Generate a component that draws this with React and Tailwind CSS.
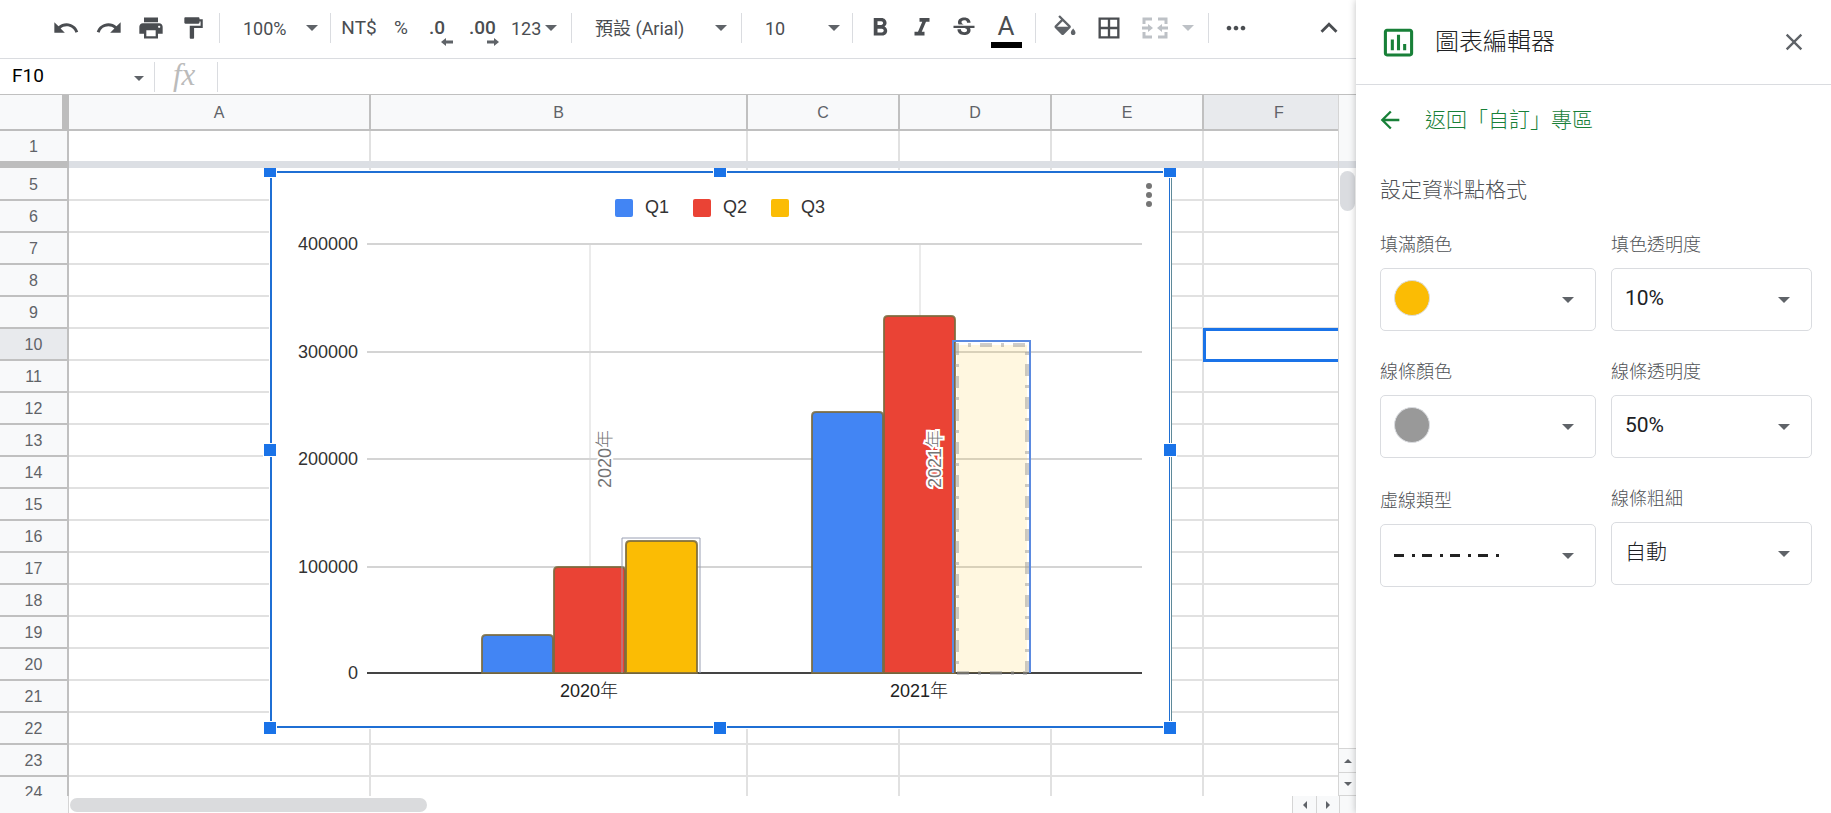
import React from "react";
import {
  MdArrowBack,
  MdBorderAll,
  MdClose,
  MdExpandLess,
  MdFormatBold,
  MdFormatItalic,
  MdFormatPaint,
  MdInsertChartOutlined,
  MdMoreHoriz,
  MdPrint,
  MdRedo,
  MdStrikethroughS,
  MdUndo,
} from "react-icons/md";

const rows = Array.from({ length: 20 }, (_, i) => i + 5);
const columns = ["A", "B", "C", "D", "E", "F"];

const Caret = ({ className = "" }) => (
  <svg
    viewBox="0 0 12 6"
    className={`w-3 h-1.5 fill-[#5f6368] pointer-events-none ${className}`}
  >
    <path d="M0 0h12L6 6z" />
  </svg>
);

const Separator = ({ className = "" }) => (
  <div className={`w-px h-[30px] bg-[#dadce0] shrink-0 ${className}`} />
);

const IconButton = ({ label, className = "w-[42px]", children }) => (
  <button
    type="button"
    aria-label={label}
    className={`h-9 flex items-center justify-center shrink-0 ${className}`}
  >
    {children}
  </button>
);

const ToolbarSelect = ({ label, value, className, caret }) => (
  <div className={`relative flex items-center shrink-0 ${className}`}>
    <select
      aria-label={label}
      className="appearance-none w-full h-9 pl-[23px] bg-transparent outline-none"
    >
      <option>{value}</option>
    </select>
    <Caret className={`absolute ${caret}`} />
  </div>
);

const FillIcon = () => (
  <svg viewBox="0 0 24 24" className="size-7 fill-[#5f6368]">
    <path d="M16.560 9.940L7.620 1 6.210 2.410l2.380 2.380-5.150 5.150c-.59.59-.59 1.540 0 2.120l5.500 5.500c.29.29.68.44 1.060.44s.77-.15 1.060-.44l5.500-5.500c.59-.58.59-1.530 0-2.120zM5.210 11L10 6.210 14.790 11H5.210zM19 12.500s-2 2.170-2 3.500c0 1.100.9 2 2 2s2-.9 2-2c0-1.330-2-3.500-2-3.500z" />
  </svg>
);

const MergeIcon = () => (
  <svg viewBox="0 0 26 22" className="w-[26px] h-[22px] fill-none stroke-[#bdc1c6] stroke-3">
    <path d="M2 7V2H10M16 2H24V7M2 15V20H10M16 20H24V15" />
    <path d="M0 11H7M26 11H19" />
    <path d="M6 7l5 4-5 4zM20 7l-5 4 5 4z" fill="#bdc1c6" stroke="none" />
  </svg>
);

const DecimalArrow = ({ flip }) => (
  <svg
    viewBox="0 0 12 8"
    className="absolute right-0 -bottom-1 w-3 h-2 fill-[#5f6368]"
  >
    <path d={flip ? "M0 2.500h7V0l5 4-5 4V5.500H0z" : "M12 2.500H5V0L0 4l5 4V5.500h7z"} />
  </svg>
);

const Toolbar = () => (
  <div
    role="toolbar"
    className="h-[59px] shrink-0 flex items-center pl-[45px] pr-1.5 pb-0.5 border-b border-[#dadce0] text-[18px] text-[#4a4d51]"
  >
    <IconButton label="復原">
      <MdUndo size={28} />
    </IconButton>
    <IconButton label="重做" className="w-11">
      <MdRedo size={28} />
    </IconButton>
    <IconButton label="列印" className="w-10">
      <MdPrint size={28} />
    </IconButton>
    <IconButton label="複製格式" className="w-11">
      <MdFormatPaint size={26} />
    </IconButton>
    <Separator className="ml-1" />
    <ToolbarSelect label="縮放" value="100%" className="w-[110px]" caret="right-3" />
    <Separator />
    <button type="button" className="w-[56px] h-9 text-[19px]">
      NT$
    </button>
    <button type="button" className="w-7 h-9 text-[19px]">
      %
    </button>
    <button type="button" className="w-[42px] h-9 pl-3.5 text-left text-[19px] font-medium">
      <span className="relative inline-block w-6">
        .0
        <DecimalArrow />
      </span>
    </button>
    <button type="button" className="w-12 h-9 pl-3 text-left text-[19px] font-medium">
      <span className="relative inline-block w-[30px]">
        .00
        <DecimalArrow flip />
      </span>
    </button>
    <button type="button" className="w-[66px] h-9 pl-1.5 flex items-center gap-1">
      123
      <Caret />
    </button>
    <Separator />
    <ToolbarSelect label="字型" value="預設 (Arial)" className="w-[169px]" caret="right-3.5" />
    <Separator />
    <ToolbarSelect label="字型大小" value="10" className="w-[110px]" caret="right-3" />
    <Separator />
    <IconButton label="粗體" className="w-[42px] ml-1.5">
      <MdFormatBold size={30} />
    </IconButton>
    <IconButton label="斜體">
      <MdFormatItalic size={30} />
    </IconButton>
    <IconButton label="刪除線">
      <MdStrikethroughS size={28} />
    </IconButton>
    <button
      type="button"
      aria-label="文字顏色"
      className="w-[42px] h-9 pt-1 flex flex-col items-center gap-1"
    >
      <span className="text-[26px] leading-6">A</span>
      <span className="w-[31px] h-1.5 bg-black shrink-0" />
    </button>
    <Separator className="mx-2" />
    <IconButton label="填滿顏色">
      <FillIcon />
    </IconButton>
    <IconButton label="框線" className="w-[46px]">
      <MdBorderAll size={28} />
    </IconButton>
    <IconButton label="合併儲存格" className="w-[46px]">
      <MergeIcon />
    </IconButton>
    <IconButton label="選取合併類型" className="w-5">
      <Caret className="fill-[#bdc1c6]!" />
    </IconButton>
    <Separator className="ml-2.5 mr-1.5" />
    <IconButton label="更多">
      <MdMoreHoriz size={28} />
    </IconButton>
    <IconButton label="隱藏選單" className="w-[42px] ml-auto">
      <MdExpandLess size={34} />
    </IconButton>
  </div>
);

const FormulaBar = () => (
  <div className="h-9 shrink-0 flex items-center border-b border-[#c0c0c0]">
    <input
      aria-label="名稱方塊"
      defaultValue="F10"
      className="w-[134px] pl-3 text-[19px] text-black outline-none"
    />
    <button type="button" aria-label="已命名範圍" className="w-5 pt-1">
      <Caret className="w-2.5! h-[5px]!" />
    </button>
    <Separator className="bg-[#c0c0c0]" />
    <span className="w-[62px] pl-[18px] pb-1 font-['Liberation_Serif',serif] italic text-[31px] leading-7 text-[#bbb]">
      fx
    </span>
    <Separator className="h-[26px]" />
    <input aria-label="公式列" className="flex-1 min-w-0 px-2 outline-none" />
  </div>
);

const SheetCols = () => (
  <colgroup>
    <col className="w-[69px]" />
    <col className="w-[302px]" />
    <col className="w-[377px]" />
    <col className="w-[152px]" />
    <col className="w-[152px]" />
    <col className="w-[152px]" />
    <col className="w-[152px]" />
  </colgroup>
);

const FrozenRows = () => (
  <table className="table-fixed w-[1356px] border-separate border-spacing-0">
    <SheetCols />
    <thead>
      <tr className="h-9">
        <td className="bg-[#f8f9fa] border-r-[7px] border-b-2 border-[#bdbdbd]" />
        {columns.map((name) => (
          <th
            key={name}
            scope="col"
            className={`border-r-2 border-b-2 border-[#c0c0c0] font-normal p-0 pt-0.5 ${
              name === "F" ? "bg-[#e8eaed]" : "bg-[#f8f9fa]"
            }`}
          >
            {name}
          </th>
        ))}
      </tr>
    </thead>
    <tbody>
      <tr className="h-[30px]">
        <th
          scope="row"
          className="bg-[#f8f9fa] border-r-2 border-[#c0c0c0] font-normal p-0 pt-0.5"
        >
          1
        </th>
        {columns.map((name) => (
          <td key={name} className="border-r-2 border-[#e1e1e1]" />
        ))}
      </tr>
    </tbody>
  </table>
);

const SheetRows = () => (
  <table className="table-fixed w-[1356px] border-separate border-spacing-0">
    <SheetCols />
    <tbody>
      {rows.map((n) => (
        <tr key={n} className={n === 5 ? "h-[33px]" : "h-8"}>
          <th
            scope="row"
            className={`border-r-2 border-b-2 border-[#c0c0c0] font-normal p-0 pt-0.5 ${
              n === 10 ? "bg-[#e8eaed]" : "bg-[#f8f9fa]"
            }`}
          >
            {n}
          </th>
          {columns.map((name) => (
            <td
              key={name}
              className={`border-r-2 border-b-2 border-[#e1e1e1] ${
                name === "F" && n === 10
                  ? "outline-3 outline-[#1a73e8] -outline-offset-2"
                  : ""
              }`}
            />
          ))}
        </tr>
      ))}
    </tbody>
  </table>
);

const legend = [
  { name: "Q1", x: 345, color: "#4285f4" },
  { name: "Q2", x: 423, color: "#ea4335" },
  { name: "Q3", x: 501, color: "#fbbc04" },
];

const gridLines = [
  { label: "400000", y: 73 },
  { label: "300000", y: 181 },
  { label: "200000", y: 288 },
  { label: "100000", y: 396 },
];

const bars = [
  { x: 212, y: 464, color: "#4285f4" },
  { x: 284, y: 396, color: "#ea4335" },
  { x: 356, y: 370, color: "#fbbc04" },
  { x: 542, y: 241, color: "#4285f4" },
  { x: 614, y: 145, color: "#ea4335" },
];

const Chart = () => (
  <svg
    viewBox="0 0 900 557"
    className="block w-[900px] h-[557px] bg-white font-['Liberation_Sans','Noto_Sans_CJK_TC',sans-serif] text-[18px]"
  >
    {legend.map(({ name, x, color }) => (
      <g key={name}>
        <rect x={x} y="28" width="18" height="18" rx="2" fill={color} />
        <text x={x + 30} y="42" fill="#333">
          {name}
        </text>
      </g>
    ))}
    <path d="M320 73V503M650 73V503" stroke="#ebebeb" strokeWidth="2" />
    {gridLines.map(({ label, y }) => (
      <g key={label}>
        <path d={`M97 ${y}H872`} stroke="#d4d4d4" strokeWidth="2" />
        <text x="88" y={y + 6} textAnchor="end" fill="#333">
          {label}
        </text>
      </g>
    ))}
    <text x="88" y="508" textAnchor="end" fill="#333">
      0
    </text>
    <path d="M97 502H872" stroke="#444" strokeWidth="2" />
    {bars.map(({ x, y, color }) => (
      <path
        key={x}
        d={`M${x} 502V${y + 4}q0-4 4-4h63q4 0 4 4V502z`}
        fill={color}
        stroke="#7a6a3c"
        strokeWidth="2"
        strokeOpacity="0.85"
      />
    ))}
    <path d="M352 502V367H430V502" fill="none" stroke="#9aa0b4" />
    <path d="M687 502V174H757V502z" fill="#fbbc04" fillOpacity="0.12" />
    <path
      d="M757 502V174H687V502H757"
      fill="none"
      stroke="#999"
      strokeOpacity="0.5"
      strokeWidth="4"
      strokeDasharray="12 9 3 9"
    />
    <path d="M683 502V170H760V502" fill="none" stroke="#5b8ae0" strokeWidth="2" />
    <g fill="#757575" stroke="#fff" strokeWidth="4" style={{ paintOrder: "stroke" }}>
      <text transform="translate(341 317) rotate(-90)" className="font-light">
        2020年
      </text>
      <text transform="translate(671 317) rotate(-90)" className="font-light">
        2021年
      </text>
    </g>
    <g fill="#222" textAnchor="middle" className="font-light">
      <text x="319" y="526">
        2020年
      </text>
      <text x="649" y="526">
        2021年
      </text>
    </g>
    <g fill="#757575">
      <circle cx="879" cy="15" r="3" />
      <circle cx="879" cy="24" r="3" />
      <circle cx="879" cy="33" r="3" />
    </g>
  </svg>
);

const handles = [
  "-left-1.5 -top-1.5",
  "left-[444px] -top-1.5",
  "-right-1.5 -top-1.5",
  "-left-1.5 top-[273px]",
  "-right-1.5 top-[273px]",
  "-left-1.5 -bottom-1.5",
  "left-[444px] -bottom-1.5",
  "-right-1.5 -bottom-1.5",
];

// Floats over the cells, selected, with its eight resize handles.
const FloatingChart = () => (
  <div className="absolute left-[270px] top-[3px] w-[900px] h-[557px]">
    <Chart />
    <div className="absolute inset-0 border-2 border-r border-[#1f6fd4] outline outline-white" />
    <div className="absolute inset-y-0 -right-[2px] w-px bg-[#5f8a99]" />
    {handles.map((place) => (
      <span
        key={place}
        className={`absolute size-3 bg-[#1a73e8] outline outline-white ${place}`}
      />
    ))}
  </div>
);

const scrollButton = "border-[#d5d5d5] bg-[#f8f9fa]";

const Sheet = () => (
  <div className="flex-1 min-h-0 flex flex-col text-[16px] text-[#5f6368] font-['Liberation_Sans',sans-serif]">
    <div className="flex-1 min-h-0 flex">
      <div className="flex-1 min-w-0 flex flex-col overflow-hidden">
        <div className="shrink-0 h-[66px] overflow-hidden">
          <FrozenRows />
        </div>
        <div className="h-[7px] shrink-0 flex">
          <div className="w-[69px] bg-[#bdbdbd]" />
          <div className="flex-1 bg-[#dcdfe4]" />
        </div>
        <div className="relative flex-1 min-h-0 overflow-hidden">
          <SheetRows />
          <FloatingChart />
        </div>
      </div>
      <div className="w-[18px] shrink-0 flex flex-col border-l border-[#d5d5d5]">
        <div className="h-[66px] bg-[#f8f9fa]" />
        <div className="h-[7px] bg-[#dcdfe4]" />
        <div className="flex-1 pt-[3px] px-px">
          <div className="h-10 rounded-full bg-[#dadce0]" />
        </div>
        <IconButton label="向上捲動" className={`h-6! border-t ${scrollButton}`}>
          <Caret className="w-2! h-1! rotate-180" />
        </IconButton>
        <IconButton label="向下捲動" className={`h-6! border-y ${scrollButton}`}>
          <Caret className="w-2! h-1!" />
        </IconButton>
      </div>
    </div>
    <div className="h-[17px] shrink-0 flex">
      <div className="w-[69px] bg-[#f8f9fa] border-r border-[#d5d5d5]" />
      <div className="flex-1 pt-0.5 pl-px">
        <div className="w-[357px] h-3.5 rounded-full bg-[#dadbdd]" />
      </div>
      <IconButton label="向左捲動" className={`h-full! w-6 border-l ${scrollButton}`}>
        <Caret className="w-2! h-1! rotate-90" />
      </IconButton>
      <IconButton label="向右捲動" className={`h-full! w-6 border-x ${scrollButton}`}>
        <Caret className="w-2! h-1! -rotate-90" />
      </IconButton>
      <div className="w-4 bg-[#f8f9fa]" />
    </div>
  </div>
);

const fieldBox =
  "w-full h-[63px] border border-[#dadce0] rounded-[5px] text-[21px] text-[#202124]";

const PickerField = ({ id, label, className = "", children }) => (
  <div className={className}>
    <label htmlFor={id} className="block h-9 pt-px text-[18px] leading-6">
      {label}
    </label>
    <button
      id={id}
      type="button"
      className={`${fieldBox} flex items-center justify-between pl-[13px] pr-[21px]`}
    >
      {children}
      <Caret />
    </button>
  </div>
);

const SelectField = ({ id, label, value, className = "" }) => (
  <div>
    <label htmlFor={id} className="block h-9 pt-px text-[18px] leading-6">
      {label}
    </label>
    <div className="relative flex items-center">
      <select
        id={id}
        className={`${fieldBox} appearance-none pl-[13px] pb-0.5 outline-none ${className}`}
      >
        <option>{value}</option>
      </select>
      <Caret className="absolute right-[22px]" />
    </div>
  </div>
);

const ChartEditor = () => (
  <aside className="relative w-[475px] shrink-0 bg-white shadow-[0_0_7px_rgba(0,0,0,0.25)] font-light text-[#4f5256]">
    <header className="h-[85px] flex items-center pl-6 pr-[23px] border-b border-[#dadce0]">
      <MdInsertChartOutlined size={37} className="text-[#188038]" />
      <h1 className="flex-1 pl-[18px] text-[24px] leading-8 text-[#202124]">
        圖表編輯器
      </h1>
      <button type="button" aria-label="關閉" className="text-[#5f6368]">
        <MdClose size={28} />
      </button>
    </header>
    <div className="pl-6 pr-[19px]">
      <button
        type="button"
        className="mt-[21px] h-7 -ml-1 flex items-center gap-[21px] text-[21px] text-[#188038]"
      >
        <MdArrowBack size={28} />
        <span className="pt-0.5">返回「自訂」專區</span>
      </button>
      <h2 className="mt-[42px] text-[21px] leading-7">設定資料點格式</h2>
      <div className="mt-7 flex gap-[15px]">
        <div className="w-[216px] flex flex-col gap-7">
          <PickerField id="fill-color" label="填滿顏色">
            <span className="size-9 mb-1 rounded-full bg-[#fbbc04] border border-[#dadce0]" />
          </PickerField>
          <PickerField id="line-color" label="線條顏色">
            <span className="size-9 mb-1 rounded-full bg-[#999] border border-[#dadce0]" />
          </PickerField>
          <PickerField id="dash-type" label="虛線類型" className="mt-0.5">
            <svg viewBox="0 0 108 3" className="w-[108px] h-[3px]">
              <path
                d="M0 1.500H108"
                stroke="#222"
                strokeWidth="3"
                strokeDasharray="10 8 3 7"
              />
            </svg>
          </PickerField>
        </div>
        <div className="flex-1 flex flex-col gap-7">
          <SelectField
            id="fill-opacity"
            label="填色透明度"
            value="10%"
            className="font-normal"
          />
          <SelectField
            id="line-opacity"
            label="線條透明度"
            value="50%"
            className="font-normal"
          />
          <SelectField id="line-width" label="線條粗細" value="自動" />
        </div>
      </div>
    </div>
  </aside>
);

const App = () => {
  return (
    <div className="h-screen flex overflow-hidden bg-white font-['Roboto','Noto_Sans_CJK_TC',sans-serif]">
      <main className="flex-1 min-w-0 flex flex-col">
        <Toolbar />
        <FormulaBar />
        <Sheet />
      </main>
      <ChartEditor />
    </div>
  );
};

export default App;
